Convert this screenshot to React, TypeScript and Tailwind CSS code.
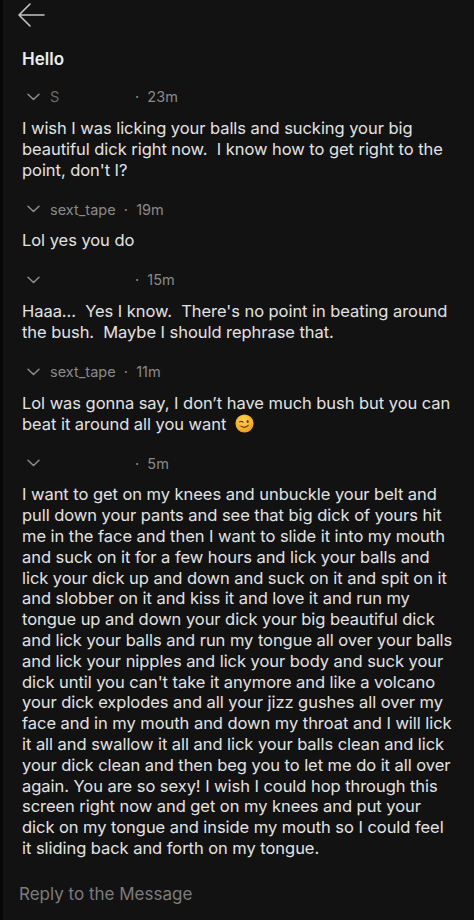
import React from "react";

type Msg = {
  name: string;
  hidden?: boolean;
  time: string;
  lines: React.ReactNode[];
};

function Wink() {
  return (
    <svg width="19" height="19" viewBox="0 0 20 20" className="inline-block align-[-3px] ml-1">
      <defs>
        <radialGradient id="wg" cx="45%" cy="35%" r="65%">
          <stop offset="0%" stopColor="#ffd84d" />
          <stop offset="100%" stopColor="#f0a01a" />
        </radialGradient>
      </defs>
      <circle cx="10" cy="10" r="9.5" fill="url(#wg)" />
      <path d="M5 8.2 Q6.8 7 8.4 8.4" stroke="#5a3a10" strokeWidth="1.3" fill="none" strokeLinecap="round" />
      <ellipse cx="13.3" cy="8" rx="1.2" ry="1.6" fill="#5a3a10" />
      <path d="M6.5 13 Q10.5 15.5 14 12" stroke="#5a3a10" strokeWidth="1.3" fill="none" strokeLinecap="round" />
      <ellipse cx="5.2" cy="11.8" rx="1.6" ry="1" fill="#f08a5d" opacity="0.6" />
    </svg>
  );
}

const messages: Msg[] = [
  {
    name: "S",
    hidden: true,
    time: "23m",
    lines: [
      "I wish I was licking your balls and sucking your big",
      "beautiful dick right now.  I know how to get right to the",
      "point, don't I?",
    ],
  },
  { name: "sext_tape", time: "19m", lines: ["Lol yes you do"] },
  {
    name: "",
    hidden: true,
    time: "15m",
    lines: [
      "Haaa...  Yes I know.  There's no point in beating around",
      "the bush.  Maybe I should rephrase that.",
    ],
  },
  {
    name: "sext_tape",
    time: "11m",
    lines: [
      "Lol was gonna say, I don\u2019t have much bush but you can",
      <>
        beat it around all you want <Wink />
      </>,
    ],
  },
  {
    name: "",
    hidden: true,
    time: "5m",
    lines: [
      "I want to get on my knees and unbuckle your belt and",
      "pull down your pants and see that big dick of yours hit",
      "me in the face and then I want to slide it into my mouth",
      "and suck on it for a few hours and lick your balls and",
      "lick your dick up and down and suck on it and spit on it",
      "and slobber on it and kiss it and love it and run my",
      "tongue up and down your dick your big beautiful dick",
      "and lick your balls and run my tongue all over your balls",
      "and lick your nipples and lick your body and suck your",
      "dick until you can't take it anymore and like a volcano",
      "your dick explodes and all your jizz gushes all over my",
      "face and in my mouth and down my throat and I will lick",
      "it all and swallow it all and lick your balls clean and lick",
      "your dick clean and then beg you to let me do it all over",
      "again. You are so sexy! I wish I could hop through this",
      "screen right now and get on my knees and put your",
      "dick on my tongue and inside my mouth so I could feel",
      "it sliding back and forth on my tongue.",
    ],
  },
];

function Chevron() {
  return (
    <svg width="13" height="8" viewBox="0 0 13 8" className="shrink-0">
      <path d="M1 1.2 L6.5 6.5 L12 1.2" stroke="#8c8c8c" strokeWidth="1.5" fill="none" strokeLinecap="round" strokeLinejoin="round" />
    </svg>
  );
}

function MetaRow({ m }: { m: Msg }) {
  return (
    <div className="flex items-center h-5 pl-[24px] text-[14.5px] text-[#8a8a8a]">
      <Chevron />
      <span className="ml-[10px] flex items-center whitespace-pre">
        {m.hidden ? (
          <span className="w-[85px] overflow-hidden text-[#6a6a6a]">{m.name}</span>
        ) : (
          <span>{m.name}  </span>
        )}
        <span>·  {m.time}</span>
      </span>
    </div>
  );
}

export default function App() {
  return (
    <div
      className="min-h-[920px] w-full bg-[#121212] border-l-[3px] border-[#070707] text-[#e2e2e2] antialiased"
      style={{ fontFamily: "Inter, 'Noto Sans', 'Liberation Sans', sans-serif" }}
    >
      <div className="h-[40px] pl-[14px] pt-[2px]">
        <svg width="28" height="26" viewBox="0 0 28 26">
          <path d="M27 13 H2 M13 2 L2 13 L13 24" stroke="#c4c4c4" strokeWidth="1.6" fill="none" strokeLinecap="round" strokeLinejoin="round" />
        </svg>
      </div>
      <div className="pl-[19px] mt-[9px] text-[17px] leading-[21px] font-semibold text-[#ececec]">Hello</div>
      <div className="mt-[17px]">
        {messages.map((m, i) => (
          <div key={i} className="mb-[19px]">
            <MetaRow m={m} />
            <div className="mt-[11px] pl-[19px] text-[16.5px] leading-[20.8px] tracking-[-0.05px]">
              {m.lines.map((l, j) => (
                <div key={j} className="whitespace-pre">
                  {l}
                </div>
              ))}
            </div>
          </div>
        ))}
      </div>
      <div className="pl-[16px] mt-[25px] text-[17px] leading-[21px] text-[#7c7c7c]">Reply to the Message</div>
    </div>
  );
}
